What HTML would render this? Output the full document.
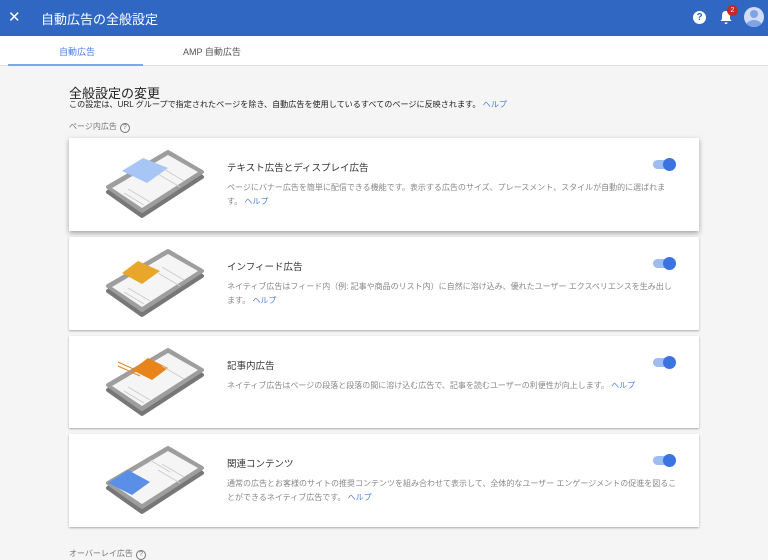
<!DOCTYPE html>
<html><head><meta charset="utf-8"><style>
*{margin:0;padding:0;box-sizing:border-box}
body{width:768px;height:559px;overflow:hidden;background:#f5f5f5;font-family:"Liberation Sans","Noto Sans CJK JP",sans-serif;position:relative}
.hdr{position:absolute;left:0;top:0;width:768px;height:36px;background:#2f67c3;color:#fff;box-shadow:0 2px 3px rgba(0,0,0,.25)}
.hdr .x{position:absolute;left:8px;top:8px;font-size:15px}
.hdr .t{position:absolute;left:41px;top:9px;font-size:13px}
.tabs{position:absolute;left:0;top:36px;width:768px;height:30px;background:#fff;border-bottom:1px solid #ddd}
.tab{position:absolute;top:9px;font-size:9px;color:#555}
.ind{position:absolute;left:8px;top:28px;width:135px;height:2px;background:#7fa6e8}
.h1{position:absolute;left:69px;top:83px;font-size:13px;color:#222}
.sub{position:absolute;left:69px;top:99px;font-size:8.1px;color:#222}
a{color:#4a7ee0;text-decoration:none}
.sec{position:absolute;left:69px;font-size:8px;color:#777}
.q{display:inline-block;width:10px;height:10px;border:1px solid #777;border-radius:50%;font-size:7px;text-align:center;line-height:8px;margin-left:3px}
.card{position:absolute;left:69px;width:630px;background:#fff;box-shadow:0 1px 2px rgba(0,0,0,.3)}
.card.big{box-shadow:0 2px 5px rgba(0,0,0,.35)}
.card h3{position:absolute;left:158px;top:22px;font-size:9.5px;font-weight:normal;color:#333}
.card p{position:absolute;left:158px;top:43px;width:450px;font-size:8px;line-height:14px;color:#888}
.tg{position:absolute;left:584px;top:22px;width:20px;height:9px;border-radius:5px;background:#9dbcef}
.tg:after{content:"";position:absolute;right:-3px;top:-2.5px;width:13px;height:13px;border-radius:50%;background:#3b74e0}
.card svg{position:absolute;left:31px;top:8px}
</style></head><body>
<div class="hdr"><span class="x">✕</span><span class="t">自動広告の全般設定</span>
<div style="position:absolute;left:693px;top:11px;width:13px;height:13px;border-radius:50%;background:#fff;color:#2f67c3;font-size:10px;font-weight:bold;text-align:center;line-height:13px">?</div>
<svg style="position:absolute;left:719px;top:10px" width="14" height="15" viewBox="0 0 14 15"><path d="M7 1c-3 0-4 2-4 5v3l-1.5 2h11L11 9V6c0-3-1-5-4-5zM5.5 12.5a1.5 1.5 0 003 0z" fill="#fff"/></svg>
<div style="position:absolute;left:727px;top:5px;width:11px;height:11px;border-radius:50%;background:#c62828;color:#fff;font-size:7px;text-align:center;line-height:11px">2</div>
<div style="position:absolute;left:744px;top:7px;width:20px;height:20px;border-radius:50%;background:#cfdcf5;overflow:hidden"><div style="position:absolute;left:6px;top:3px;width:8px;height:8px;border-radius:50%;background:#7ea3e6"></div><div style="position:absolute;left:2px;top:13px;width:16px;height:12px;border-radius:50%;background:#7ea3e6"></div></div>
</div>
<div class="tabs"><span class="tab" style="left:59px;color:#4a7ee0">自動広告</span><span class="tab" style="left:183px">AMP 自動広告</span><div class="ind"></div></div>
<div class="h1">全般設定の変更</div>
<div class="sub">この設定は、URL グループで指定されたページを除き、自動広告を使用しているすべてのページに反映されます。 <a>ヘルプ</a></div>
<div class="sec" style="top:121px">ページ内広告<span class="q">?</span></div>

<div class="card big" style="top:138px;height:93px">
<svg width="110" height="75" viewBox="0 0 110 75"><polygon points="68,11 102,31 42,70 8,46" fill="#777" stroke="#777" stroke-width="4" stroke-linejoin="round"/><polygon points="68,6 102,26 42,65 8,41" fill="#9e9e9e" stroke="#9e9e9e" stroke-width="4" stroke-linejoin="round"/><polygon points="68,9 98,26 42,62 12,42" fill="#f5f5f5"/><polygon points="43,12 68,22 47,37 22,25" fill="#a8c6f5"/><g stroke="#ccc"><line x1="62" y1="22" x2="84" y2="35"/><line x1="58" y1="28" x2="80" y2="41"/><line x1="28" y1="43" x2="50" y2="56"/><line x1="24" y1="47" x2="44" y2="59"/></g></svg>
<h3>テキスト広告とディスプレイ広告</h3><p>ページにバナー広告を簡単に配信できる機能です。表示する広告のサイズ、プレースメント、スタイルが自動的に選ばれます。 <a>ヘルプ</a></p><div class="tg"></div></div>

<div class="card" style="top:237px;height:93px">
<svg width="110" height="75" viewBox="0 0 110 75"><polygon points="68,11 102,31 42,70 8,46" fill="#777" stroke="#777" stroke-width="4" stroke-linejoin="round"/><polygon points="68,6 102,26 42,65 8,41" fill="#9e9e9e" stroke="#9e9e9e" stroke-width="4" stroke-linejoin="round"/><polygon points="68,9 98,26 42,62 12,42" fill="#f5f5f5"/><polygon points="38,16 60,26 42,39 22,28" fill="#e8a62a"/><g stroke="#ccc"><line x1="62" y1="22" x2="84" y2="35"/><line x1="58" y1="28" x2="80" y2="41"/><line x1="28" y1="43" x2="50" y2="56"/><line x1="24" y1="47" x2="44" y2="59"/></g></svg>
<h3>インフィード広告</h3><p>ネイティブ広告はフィード内（例: 記事や商品のリスト内）に自然に溶け込み、優れたユーザー エクスペリエンスを生み出します。 <a>ヘルプ</a></p><div class="tg"></div></div>

<div class="card" style="top:336px;height:92px">
<svg width="110" height="75" viewBox="0 0 110 75"><polygon points="68,11 102,31 42,70 8,46" fill="#777" stroke="#777" stroke-width="4" stroke-linejoin="round"/><polygon points="68,6 102,26 42,65 8,41" fill="#9e9e9e" stroke="#9e9e9e" stroke-width="4" stroke-linejoin="round"/><polygon points="68,9 98,26 42,62 12,42" fill="#f5f5f5"/><polygon points="48,14 68,24 52,36 32,26" fill="#e8841c"/><g stroke="#e8841c"><line x1="18" y1="18" x2="40" y2="28"/><line x1="18" y1="22" x2="40" y2="32"/></g><g stroke="#ccc"><line x1="62" y1="22" x2="84" y2="35"/><line x1="28" y1="43" x2="50" y2="56"/><line x1="24" y1="47" x2="44" y2="59"/></g></svg>
<h3>記事内広告</h3><p>ネイティブ広告はページの段落と段落の間に溶け込む広告で、記事を読むユーザーの利便性が向上します。 <a>ヘルプ</a></p><div class="tg"></div></div>

<div class="card" style="top:434px;height:93px">
<svg width="110" height="75" viewBox="0 0 110 75"><polygon points="68,11 102,31 42,70 8,46" fill="#777" stroke="#777" stroke-width="4" stroke-linejoin="round"/><polygon points="68,6 102,26 42,65 8,41" fill="#9e9e9e" stroke="#9e9e9e" stroke-width="4" stroke-linejoin="round"/><polygon points="68,9 98,26 42,62 12,42" fill="#f5f5f5"/><polygon points="28,28 50,40 32,53 8,41" fill="#5a8fe8"/><g stroke="#ccc"><line x1="62" y1="22" x2="84" y2="35"/><line x1="58" y1="28" x2="80" y2="41"/><line x1="50" y1="18" x2="70" y2="30"/></g></svg>
<h3>関連コンテンツ</h3><p>通常の広告とお客様のサイトの推奨コンテンツを組み合わせて表示して、全体的なユーザー エンゲージメントの促進を図ることができるネイティブ広告です。 <a>ヘルプ</a></p><div class="tg"></div></div>

<div class="sec" style="top:548px">オーバーレイ広告<span class="q">?</span></div>
</body></html>
